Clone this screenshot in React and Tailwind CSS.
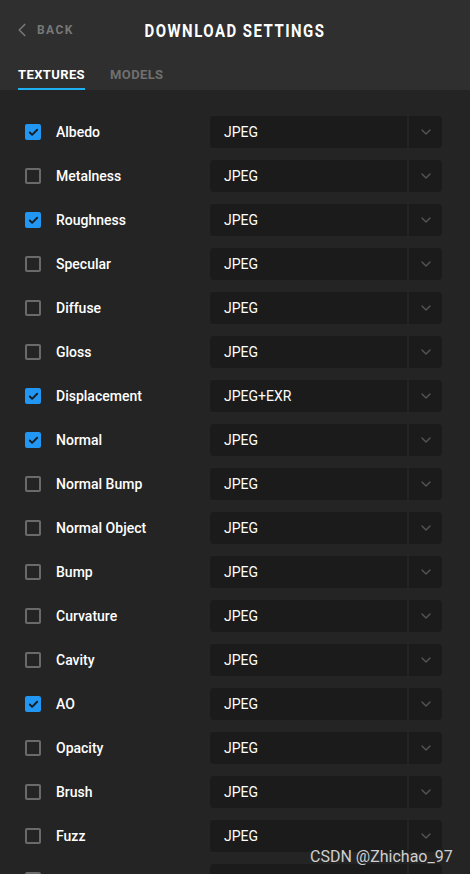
import { ChevronLeft, ChevronDown, Check } from "lucide-react";

const textures = [
  ["Albedo", true, "JPEG"],
  ["Metalness", false, "JPEG"],
  ["Roughness", true, "JPEG"],
  ["Specular", false, "JPEG"],
  ["Diffuse", false, "JPEG"],
  ["Gloss", false, "JPEG"],
  ["Displacement", true, "JPEG+EXR"],
  ["Normal", true, "JPEG"],
  ["Normal Bump", false, "JPEG"],
  ["Normal Object", false, "JPEG"],
  ["Bump", false, "JPEG"],
  ["Curvature", false, "JPEG"],
  ["Cavity", false, "JPEG"],
  ["AO", true, "JPEG"],
  ["Opacity", false, "JPEG"],
  ["Brush", false, "JPEG"],
  ["Fuzz", false, "JPEG"],
  ["Mask", false, "JPEG"],
];

function TextureRow({ name, checked, format }) {
  return (
    <div className="flex h-[44px] items-center">
      <div className="flex w-[56px] pl-[25px]">
        {checked ? (
          <span className="flex h-4 w-4 items-center justify-center rounded-[2px] bg-[#2196f3]">
            <Check size={11} strokeWidth={4} className="text-[#1b1b1b]" />
          </span>
        ) : (
          <span className="h-4 w-4 rounded-[2px] border-2 border-[#6a6a6a]" />
        )}
      </div>
      <span className="flex-1 text-[14px] font-medium text-white">{name}</span>
      <div className="mr-[28px] flex h-8 w-[232px] overflow-hidden rounded-[4px]">
        <div className="flex flex-1 items-center bg-[#1b1b1b] pl-[14px] text-[14px] text-white">
          {format}
        </div>
        <div className="w-[2px] bg-[#232323]" />
        <div className="flex w-[33px] items-center justify-center bg-[#1b1b1b]">
          <ChevronDown size={16} strokeWidth={2} className="text-[#555]" />
        </div>
      </div>
    </div>
  );
}

export default function App() {
  return (
    <div className="relative h-[874px] overflow-hidden bg-[#242424] font-['Roboto',sans-serif]">
      <header className="h-[90px] bg-[#2f2f2f]">
        <div className="relative flex h-[60px] items-center justify-center">
          <button className="absolute left-[11px] top-[19px] flex items-center gap-[4px] text-[#777]">
            <ChevronLeft size={22} strokeWidth={1.8} />
            <span className="text-[12px] font-bold tracking-[0.12em]">BACK</span>
          </button>
          <h1 className="scale-x-[0.83] text-[18px] font-bold tracking-[0.1em] text-white">
            DOWNLOAD SETTINGS
          </h1>
        </div>
        <nav className="flex h-[30px] gap-[25px] pl-[18px]">
          <div className="flex flex-col justify-end">
            <span className="pb-[7px] text-[13px] font-bold leading-none tracking-[0.03em] text-white">TEXTURES</span>
            <span className="h-[2px] bg-[#1eb0f0]" />
          </div>
          <div className="flex flex-col justify-end">
            <span className="pb-[9px] text-[13px] font-bold leading-none tracking-[0.03em] text-[#6f6f6f]">MODELS</span>
          </div>
        </nav>
      </header>
      <div className="pt-[20px]">
        {textures.map(([name, checked, format]) => (
          <TextureRow key={name} name={name} checked={checked} format={format} />
        ))}
      </div>
      <span className="absolute left-[310px] top-[845px] text-[16px] text-[#cfcfcf]">
        CSDN @Zhichao_97
      </span>
    </div>
  );
}
